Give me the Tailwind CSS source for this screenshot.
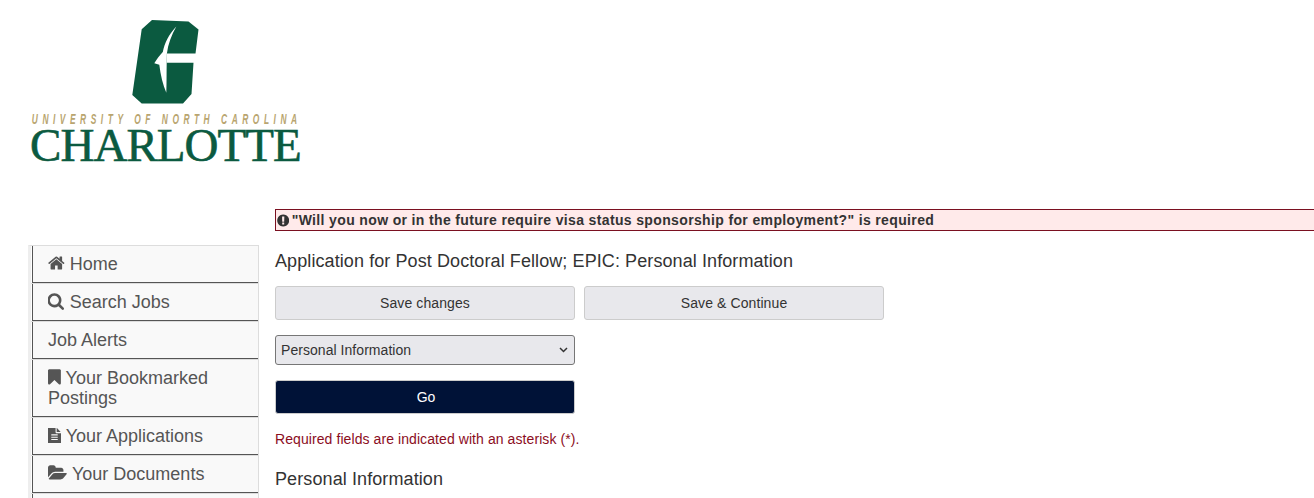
<!DOCTYPE html>
<html lang="en">
<head>
<meta charset="utf-8">
<title>Personal Information</title>
<script src="https://cdn.jsdelivr.net/npm/@tailwindcss/browser@4"></script>
</head>
<body class="bg-white overflow-hidden font-['Liberation_Sans',Arial,sans-serif] text-[#333]">

<div class="h-[498px] w-[1314px] overflow-hidden">
	<!-- logo -->
	<header class="h-[209px] pl-[30px] pt-[20px]">
		<div class="w-[272px]">
			<svg class="block ml-[102px]" width="67" height="84" viewBox="132 20 67 84">
				<path fill="#0b5a40" d="M152 20L188.500 21.500L198.500 29.500L195.500 53.500L167 53.500L166.700 62.700L193.500 62.700L191.500 94L183 103.500L141.700 103.500L132.300 95L141.700 29.300Z"/>
				<path fill="#fff" d="M176.300 26.500C169 34 164.500 43 162.800 52C159.500 55.500 156.500 59.500 154.300 63.300L159.300 64.800C160.500 75 163 85 166.300 92.700C166.700 82 166.500 72 166.700 62.700L166.900 53.500C168 44 171.500 35 176.300 26.500Z"/>
			</svg>
			<div class="mt-[9px] h-[13px] pl-[3px] origin-left scale-x-[0.6] w-[470px] text-[14px] leading-[13px] italic font-bold tracking-[7.550px] text-[#b9a56f] whitespace-nowrap">UNIVERSITY OF NORTH CAROLINA</div>
			<div class="h-[38px] -mt-[1px] font-['Liberation_Serif',serif] [-webkit-text-stroke:0.6px_#0b5a40] text-[47px] leading-[41px] tracking-[-0.950px] text-[#0b5a40] whitespace-nowrap">CHARLOTTE</div>
		</div>
	</header>

	<div class="flex items-start">
		<!-- side menu -->
		<nav class="w-[231px] ml-[28px] mt-[36px] shrink-0 border-t border-r border-l-[3px] border-t-[#ddd] border-r-[#ddd] border-l-[#eee] text-[18px] leading-[20px] text-[#555]">
			<div class="border-b border-[#ddd]">
				<a href="#" class="block bg-[#f9f9f9] ml-[1px] border-l border-b border-[#555] pl-[15px] pr-2 pt-[8px] h-[37px]">
					<svg class="inline-block align-[-2px] w-[16.700px] h-[18px]" viewBox="64 0 1664 1792" fill="currentColor"><path d="M1472 992v480q0 26-19 45t-45 19h-384v-384h-256v384h-384q-26 0-45-19t-19-45v-480q0-1 .5-3t.5-3l575-474 575 474q1 2 1 6zm223-69l-62 74q-8 9-21 11h-3q-13 0-21-7l-692-577-692 577q-12 8-24 7-13-2-21-11l-62-74q-8-10-7-23.500t11-21.500l719-599q32-26 76-26t76 26l244 204v-195q0-14 9-23t23-9h192q14 0 23 9t9 23v408l219 182q10 8 11 21.500t-7 23.500z"/></svg> Home</a>
			</div>
			<div class="border-b border-[#ddd]">
				<a href="#" class="block bg-[#f9f9f9] ml-[1px] border-l border-b border-[#555] pl-[15px] pr-2 pt-[8px] h-[37px]">
					<svg class="inline-block align-[-2px] w-[16.700px] h-[18px]" viewBox="128 0 1664 1792" fill="currentColor"><path d="M1216 832q0-185-131.500-316.500t-316.500-131.500-316.500 131.500-131.500 316.500 131.500 316.500 316.500 131.500 316.500-131.500 131.500-316.500zm512 832q0 52-38 90t-90 38q-54 0-90-38l-343-342q-179 124-399 124-143 0-273.500-55.500t-225-150-150-225-55.500-273.500 55.500-273.500 150-225 225-150 273.500-55.500 273.500 55.500 225 150 150 225 55.500 273.500q0 220-124 399l343 343q37 37 37 90z"/></svg> Search Jobs</a>
			</div>
			<div class="border-b border-[#ddd]">
				<a href="#" class="block bg-[#f9f9f9] ml-[1px] border-l border-b border-[#555] pl-[15px] pr-2 pt-[8px] h-[37px]">Job Alerts</a>
			</div>
			<div class="border-b border-[#ddd]">
				<a href="#" class="block bg-[#f9f9f9] ml-[1px] border-l border-b border-[#555] pl-[15px] pr-2 pt-[8px] h-[57px]">
					<svg class="inline-block align-[-2px] w-[12.900px] h-[18px]" viewBox="256 0 1280 1792" fill="currentColor"><path d="M1420 128q23 0 44 9 33 13 52.500 41t19.500 62v1289q0 34-19.500 62t-52.500 41q-19 8-44 8-48 0-83-32l-441-424-441 424q-36 33-83 33-23 0-44-9-33-13-52.500-41t-19.500-62v-1289q0-34 19.500-62t52.500-41q21-9 44-9h1048z"/></svg> Your Bookmarked Postings</a>
			</div>
			<div class="border-b border-[#ddd]">
				<a href="#" class="block bg-[#f9f9f9] ml-[1px] border-l border-b border-[#555] pl-[15px] pr-2 pt-[8px] h-[37px]">
					<svg class="inline-block align-[-1px] w-[13px] h-[15px]" viewBox="128 64 1536 1664" preserveAspectRatio="none" fill="currentColor"><path d="M1596 476q14 14 28 36h-472v-472q22 14 36 28zm-476 164h544v1056q0 40-28 68t-68 28h-1344q-40 0-68-28t-28-68v-1600q0-40 28-68t68-28h800v544q0 40 28 68t68 28zm160 736v-64q0-14-9-23t-23-9h-704q-14 0-23 9t-9 23v64q0 14 9 23t23 9h704q14 0 23-9t9-23zm0-256v-64q0-14-9-23t-23-9h-704q-14 0-23 9t-9 23v64q0 14 9 23t23 9h704q14 0 23-9t9-23zm0-256v-64q0-14-9-23t-23-9h-704q-14 0-23 9t-9 23v64q0 14 9 23t23 9h704q14 0 23-9t9-23z"/></svg> Your Applications</a>
			</div>
			<div class="border-b border-[#ddd]">
				<a href="#" class="block bg-[#f9f9f9] ml-[1px] border-l border-b border-[#555] pl-[15px] pr-2 pt-[8px] h-[37px]">
					<svg class="inline-block align-[-2px] w-[19.300px] h-[18px]" viewBox="0 0 1920 1792" fill="currentColor"><path d="M1879 952q0 31-31 66l-336 396q-43 51-120.500 86.500t-143.500 35.500h-1088q-34 0-60.500-13t-26.500-43q0-31 31-66l336-396q43-51 120.500-86.500t143.500-35.500h1088q34 0 60.500 13t26.500 43zm-343-344v160h-832q-94 0-197 47.500t-164 119.500l-337 396-5 6q0-4-.5-12.500t-.5-12.500v-960q0-92 66-158t158-66h320q92 0 158 66t66 158v32h544q92 0 158 66t66 158z"/></svg> Your Documents</a>
			</div>
			<div class="bg-[#f9f9f9] ml-[1px] border-l border-[#555] h-[20px]"></div>
		</nav>

		<!-- main column -->
		<main class="ml-[16px] grow min-w-0">
			<div class="w-[1060px] h-[22px] bg-[#ffeaea] border border-[#7a1020] pl-[1px] text-[14px] leading-[20px] font-bold tracking-[0.360px] text-[#333] whitespace-nowrap">
				<svg class="inline-block align-[-2px] w-[12.400px] h-[13px] -mr-[2px]" viewBox="128 64 1536 1664" fill="currentColor"><path d="M896 128q209 0 385.500 103t279.500 279.500 103 385.500-103 385.500-279.500 279.500-385.500 103-385.500-103-279.500-279.500-103-385.500 103-385.500 279.500-279.500 385.500-103zm128 1247v-190q0-14-9-23.500t-22-9.500h-192q-13 0-23 10t-10 23v190q0 13 10 23t23 10h192q13 0 22-9.500t9-23.500zm-2-344l18-621q0-12-10-18-10-8-24-8h-220q-14 0-24 8-10 6-10 18l17 621q0 10 10 17.500t24 7.500h185q14 0 23.500-7.500t10.500-17.500z"/></svg> "Will you now or in the future require visa status sponsorship for employment?" is required
			</div>

			<h1 class="mt-[20px] text-[18px] leading-[20px] font-normal tracking-[0.090px]">Application for Post Doctoral Fellow; EPIC: Personal Information</h1>

			<div class="mt-[15px] flex gap-[9px]">
				<button class="w-[300px] h-[34px] bg-[#e8e8ec] border border-[#ccc] rounded-[3px] text-[14px] tracking-[0.100px] text-[#333]">Save changes</button>
				<button class="w-[300px] h-[34px] bg-[#e8e8ec] border border-[#ccc] rounded-[3px] text-[14px] tracking-[0.100px] text-[#333]">Save &amp; Continue</button>
			</div>

			<div class="relative mt-[15px] w-[300px] h-[30px] bg-[#e8e8ec] border border-[#767676] rounded-[3px] pl-[5px] text-[14px] leading-[28px] tracking-[0.050px] text-[#333]">
				Personal Information
				<svg class="absolute right-[6px] top-[11px]" width="9" height="6" viewBox="0 0 9 6" fill="none" stroke="#333" stroke-width="1.500"><path d="M1 1L4.500 4.500L8 1"/></svg>
			</div>

			<button class="block mt-[15px] w-[300px] h-[34px] pl-[2px] bg-[#001237] border border-[#ccc] rounded-[3px] text-[14px] text-white">Go</button>

			<p class="mt-[17px] text-[14px] leading-[16px] tracking-[0.080px] text-[#8b0d1d]">Required fields are indicated with an asterisk (*).</p>

			<h2 class="mt-[22px] text-[18px] leading-[20px] font-normal tracking-[0.100px]">Personal Information</h2>
		</main>
	</div>
</div>

</body>
</html>
